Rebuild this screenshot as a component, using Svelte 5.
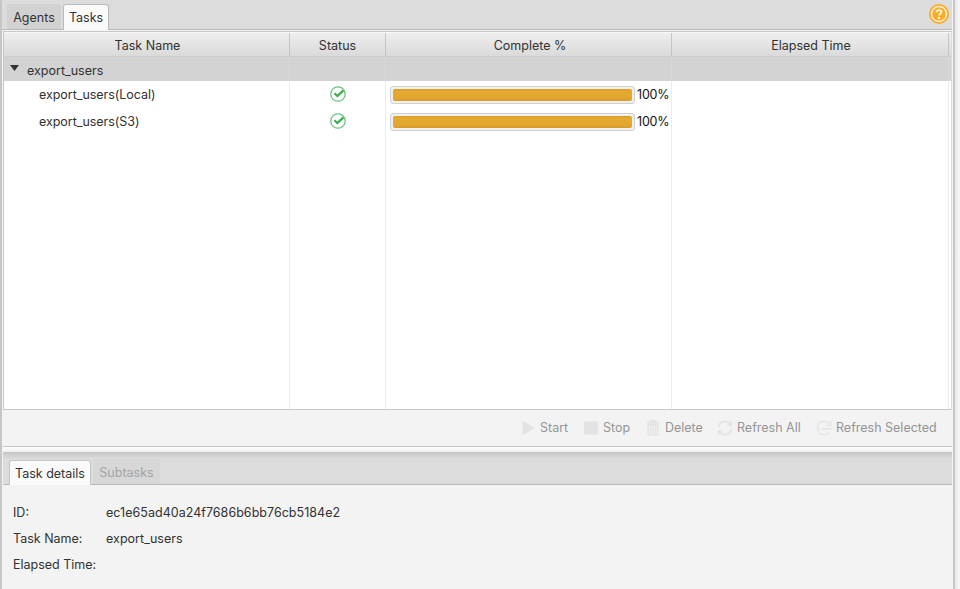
<script lang="ts">
	interface Task {
		name: string;
		done: boolean;
		percent: number;
		elapsed: string;
	}

	let expanded = $state(true);

	const group = 'export_users';
	const columns = ['Task Name', 'Status', 'Complete %', 'Elapsed Time'];

	const tasks: Task[] = [
		{ name: 'export_users(Local)', done: true, percent: 100, elapsed: '' },
		{ name: 'export_users(S3)', done: true, percent: 100, elapsed: '' }
	];

	const details = [
		{ label: 'ID:', value: 'ec1e65ad40a24f7686b6bb76cb5184e2' },
		{ label: 'Task Name:', value: 'export_users' },
		{ label: 'Elapsed Time:', value: '' }
	];
</script>

<div class="window">
	<main class="content">
		<nav class="tabs">
			<button class="tab agents">Agents</button>
			<button class="tab tasks active">Tasks</button>
			<button class="help" aria-label="Help">
				<svg width="20" height="20" viewBox="0 0 20 20">
					<circle cx="10" cy="10" r="10" fill="#fdaa25" />
					<circle cx="10" cy="10" r="7.5" fill="none" stroke="#fff2d6" stroke-width="1.5" />
					<path d="M7.6 8.2C7.7 5.5 12.4 5.5 12.4 8.1C12.4 9.9 10 9.8 10 11.6" fill="none" stroke="#fff6e4" stroke-width="1.9" />
					<circle cx="10" cy="14" r="1.2" fill="#fff6e4" />
				</svg>
			</button>
		</nav>

		<section class="table">
			<div class="row header">
				{#each columns as column}
					<div class="cell">{column}</div>
				{/each}
				<div class="cell"></div>
			</div>
			<div class="row group">
				<div class="cell">
					<button class="toggle" aria-label="Toggle group" onclick={() => (expanded = !expanded)}>
						<svg width="9" height="6" viewBox="0 0 9 6"><path d="M0 0H9L4.5 6Z" fill="#333" /></svg>
					</button>
					{group}
				</div>
				<div class="cell"></div>
				<div class="cell"></div>
				<div class="cell"></div>
				<div class="cell"></div>
			</div>
			{#if expanded}
				{#each tasks as task}
					<div class="row task">
						<div class="cell name">{task.name}</div>
						<div class="cell status">
							{#if task.done}
								<svg width="16" height="16" viewBox="0 0 16 16" fill="none">
									<circle cx="8" cy="8" r="7.2" stroke="#6ac57b" stroke-width="1.3" />
									<path d="M4.4 7.3L7.4 10L13.4 4.4" stroke="#39ae51" stroke-width="2.2" />
								</svg>
							{/if}
						</div>
						<div class="cell complete">
							<div class="track"><div class="bar" style="width: {task.percent}%"></div></div>
							<span class="percent">{task.percent}%</span>
						</div>
						<div class="cell">{task.elapsed}</div>
						<div class="cell"></div>
					</div>
				{/each}
			{/if}
			<div class="row filler">
				{#each [...columns, ''] as _}
					<div class="cell"></div>
				{/each}
			</div>
		</section>

		<div class="toolbar">
			<button class="action start" disabled>
				<svg width="13" height="16" viewBox="0 0 13 16"><path d="M0.5 0.5L12.5 8L0.5 15.5Z" fill="#e3e3e3" /></svg>
				<span>Start</span>
			</button>
			<button class="action stop" disabled>
				<svg width="14" height="14" viewBox="0 0 14 14"><path d="M0 0.5H14V13.5H0Z" fill="#e3e3e3" /></svg>
				<span>Stop</span>
			</button>
			<button class="action delete" disabled>
				<svg width="12" height="16" viewBox="0 0 12 16" fill="none" stroke="#e2e2e2">
					<path d="M4 2V0.7H8V2M0 2.7H12" stroke-width="1.5" />
					<path d="M1.2 4.5V14.8H10.8V4.5Z" fill="#efefef" stroke-width="1.3" />
					<path d="M3.7 5V13M6 5V13M8.3 5V13" />
				</svg>
				<span>Delete</span>
			</button>
			<button class="action all" disabled>
				<svg width="16" height="16" viewBox="0 0 16 16" fill="none" stroke="#e4e4e4" stroke-width="1.8">
					<path d="M1.4 7A6.6 6.6 0 0 1 13 3.8M14.6 9A6.6 6.6 0 0 1 3 12.2" />
					<path d="M15 0.5V6H9.5ZM1 15.5V10H6.5Z" fill="#e4e4e4" stroke="none" />
				</svg>
				<span>Refresh All</span>
			</button>
			<button class="action selected" disabled>
				<svg width="16" height="16" viewBox="0 0 16 16" fill="none" stroke="#e6e6e6" stroke-width="1.8">
					<path d="M13.2 3.6A6.7 6.7 0 1 0 13.2 12.4" />
					<path d="M5.5 9H15.5" />
					<path d="M15.5 0.5V6H10Z" fill="#e6e6e6" stroke="none" />
				</svg>
				<span>Refresh Selected</span>
			</button>
		</div>

		<div class="splitter"></div>

		<nav class="tabs detail-tabs">
			<button class="tab task-details active">Task details</button>
			<button class="tab subtasks" disabled>Subtasks</button>
		</nav>

		<section class="details">
			{#each details as item}
				<div class="detail">
					<span class="label">{item.label}</span>
					<span class="value">{item.value}</span>
				</div>
			{/each}
		</section>
	</main>
</div>

<style>
	:global(body) {
		margin: 0;
		overflow: hidden;
	}

	.window {
		display: flex;
		width: 960px;
		height: 589px;
		box-sizing: border-box;
		border-left: 2px solid #c6c6c6;
		background: linear-gradient(to right, #f3f3f3 951px, #c8c8c8 951px, #c8c8c8 953px, #e8e8e8 953px, #f8f8f8);
		font-family: Inter, 'Open Sans', sans-serif;
		font-size: 12.5px;
		color: #323232;
	}

	button {
		margin: 0;
		padding: 0;
		border: none;
		background: none;
		font: inherit;
		color: inherit;
	}

	svg {
		display: block;
		flex: none;
	}

	.content {
		display: flex;
		flex-direction: column;
		width: 950px;
		background: #f3f3f3;
	}

	.tabs {
		display: flex;
		align-items: flex-end;
		height: 30px;
		box-sizing: border-box;
		padding-left: 5px;
		border-bottom: 1px solid #b8b8b8;
		background: #dcdcdc;
	}

	.tab {
		box-sizing: border-box;
		height: 25px;
		padding-top: 2px;
		border-radius: 3px 3px 0 0;
		background: #d2d2d2;
		white-space: nowrap;
	}

	.tab.active {
		margin-bottom: -1px;
		padding-top: 0;
		border: 1px solid #b9b9b9;
		border-bottom: none;
		background: #fafafa;
	}

	.agents {
		width: 54px;
	}

	.tasks {
		width: 46px;
		height: 26px;
		margin-left: 2px;
	}

	.help {
		margin: 0 3px 5px auto;
	}

	.table {
		display: flex;
		flex-direction: column;
		height: 379px;
		box-sizing: border-box;
		margin: 1px 0 0 1px;
		border: 1px solid #c8c8c8;
		border-right-color: #ddd;
		background: #fff;
	}

	.row {
		display: grid;
		grid-template-columns: 286px 96px 286px 277px 1fr;
		flex: none;
	}

	.cell {
		display: flex;
		align-items: center;
		box-sizing: border-box;
		border-right: 1px solid #ececec;
	}

	.cell:last-child {
		border-right: none;
	}

	.header {
		height: 25px;
		box-sizing: border-box;
		border-top: 1px solid #f8f8f8;
		border-bottom: 1px solid #cdcdcd;
		background: linear-gradient(#eee, #dadada);
	}

	.header .cell {
		justify-content: center;
		padding-top: 2px;
		padding-left: 2px;
		border-right-color: #c4c4c4;
	}

	.header .cell:nth-child(2) {
		padding-left: 0;
	}

	.header .cell:nth-child(3) {
		padding-left: 3px;
	}

	.group {
		height: 24px;
		background: #d3d3d3;
	}

	.group .cell {
		padding-top: 2px;
		border-right-color: #dadada;
	}

	.toggle {
		margin: -4px 8px 0 6px;
	}

	.task {
		height: 27px;
	}

	.name {
		padding: 0 0 1px 35px;
		letter-spacing: -0.04px;
	}

	.status {
		justify-content: center;
		padding-bottom: 1px;
	}

	.complete {
		padding-left: 4px;
	}

	.track {
		width: 245px;
		height: 18px;
		box-sizing: border-box;
		padding: 2px;
		border: 1px solid #d0d0d0;
		border-radius: 3px;
		background: #f0f0f0;
	}

	.bar {
		height: 12px;
		border-radius: 2px;
		background: linear-gradient(#d99d2c, #e5a930 20%, #e3a72f 75%, #d69a2a);
	}

	.percent {
		margin: -1px 0 0 2px;
		letter-spacing: -0.2px;
		color: #111;
	}

	.filler {
		flex: 1;
	}

	.toolbar {
		display: flex;
		align-items: center;
		height: 36px;
		box-sizing: border-box;
		padding-bottom: 1px;
		color: #959595;
	}

	.action {
		display: flex;
		align-items: center;
		white-space: nowrap;
	}

	.start {
		width: 62px;
		gap: 5px;
		margin-left: 520px;
	}

	.stop {
		width: 62px;
		gap: 5px;
	}

	.delete {
		width: 71px;
		gap: 6px;
		padding-left: 1px;
	}

	.all {
		width: 99px;
		gap: 4px;
	}

	.selected {
		gap: 4px;
	}

	.splitter {
		height: 6px;
		box-sizing: border-box;
		margin-left: 1px;
		border-top: 1px solid #c5c5c5;
		background: linear-gradient(#fff, #ededed);
	}

	.detail-tabs {
		height: 33px;
		margin-left: 1px;
		padding-left: 6px;
		background: linear-gradient(#c5c5c5, #dcdcdc 7px);
	}

	.task-details {
		width: 82px;
		border-color: #bfc8cb !important;
	}

	.subtasks {
		width: 67px;
		margin-left: 2px;
		background: #d7d7d7;
		color: #a4a4a4;
	}

	.details {
		padding: 15px 0 0 11px;
	}

	.detail {
		display: flex;
		align-items: center;
		height: 26px;
		box-sizing: border-box;
		padding-bottom: 1px;
	}

	.label {
		width: 93px;
	}

	.value {
		letter-spacing: 0.03px;
	}
</style>
